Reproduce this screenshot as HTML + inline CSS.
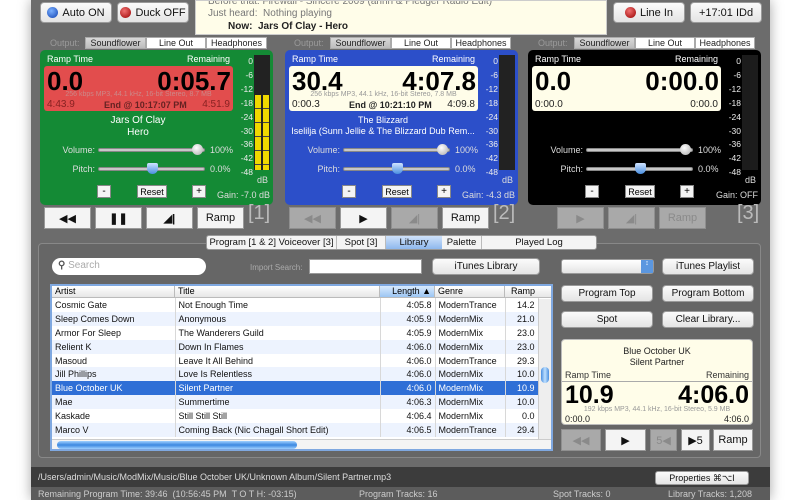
<!DOCTYPE html>
<html><head><meta charset="utf-8">
<style>
*{box-sizing:border-box;margin:0;padding:0}
body{width:800px;height:500px;overflow:hidden;background:#fff;font-family:"Liberation Sans",sans-serif;font-size:9px;position:relative}
.a{position:absolute}
#win{left:31px;top:0;width:739px;height:500px;background:#6c6c6c;box-shadow:0 0 12px rgba(0,0,0,.35)}
.btn{position:absolute;background:linear-gradient(#fbfbfb,#e4e4e4);border:1px solid #9a9a9a;border-radius:4px;color:#111;font-size:11px;display:flex;align-items:center;justify-content:center;white-space:nowrap}
.sq{position:absolute;background:#f4f4f4;border:1px solid #999;color:#111;display:flex;align-items:center;justify-content:center;font-size:11px}
.dis{background:#a9a9a9;color:#8a8a8a;border-color:#8f8f8f}
.dot{width:11px;height:11px;border-radius:50%;display:inline-block;margin-right:4px}
.tab{position:absolute;top:37px;height:12px;background:#fff;border:1px solid #aaa;font-size:9px;display:flex;align-items:center;justify-content:center;color:#222;white-space:nowrap}
.tab.sel{background:linear-gradient(#d8d8d8,#bdbdbd)}
.outl{position:absolute;top:38px;font-size:9px;color:#9a9a9a}
.deck{position:absolute;top:50px;width:233px;height:155px;border-radius:5px}
.lbl{position:absolute;font-size:9px;color:#fff;white-space:nowrap}
.disp{position:absolute;left:4px;top:16px;width:189px;height:45px;border-radius:3px}
.big{position:absolute;top:0;font-size:26px;font-weight:bold;color:#000;line-height:30px}
.sm{position:absolute;font-size:10px;color:#222;white-space:nowrap}
.scale{position:absolute;left:199px;top:5px;width:14px;font-size:8.5px;color:#eee;text-align:right;line-height:13.9px}
.meter{position:absolute;left:214px;top:5px;width:16px;height:115px;background:#222}
.trk{position:absolute;height:4px;background:#c8c8c8;border-radius:2px;border:1px solid #888}
.knob{position:absolute;width:11px;height:11px;border-radius:50%;background:radial-gradient(circle at 40% 35%,#fff,#aaa)}
.pk{position:absolute;width:11px;height:11px;background:linear-gradient(#cfe3ff,#4a8fe0);border-radius:2px 2px 6px 6px}
.mini{position:absolute;width:14px;height:13px;background:#f4f4f4;border:1px solid #888;font-size:10px;display:flex;align-items:center;justify-content:center}
.num{position:absolute;top:202px;font-size:20px;color:#bbb}
table{border-collapse:collapse;font-size:9px;width:100%}
td{height:13.9px;padding:0 3px;border-right:1px solid #d8d8d8;white-space:nowrap;color:#111;overflow:hidden}
tr:nth-child(even) td{background:#edf3fe}
tr.s td{background:#2f6fd6;color:#fff}
.r{text-align:right}
.gain{right:3px;top:140px;color:#ddd}
</style></head><body>
<div id="win" class="a"></div>

<!-- top -->
<div class="btn" style="left:40px;top:2px;width:72px;height:21px"><span class="dot" style="background:radial-gradient(circle at 40% 35%,#7ab0ff,#1040b0)"></span>Auto ON</div>
<div class="btn" style="left:117px;top:2px;width:72px;height:21px"><span class="dot" style="background:radial-gradient(circle at 40% 35%,#f07070,#900)"></span>Duck OFF</div>
<div class="a" style="left:195px;top:0;width:412px;height:35px;background:#fffde9;border:1px solid #ccc;overflow:hidden">
 <div class="a" style="left:12px;top:-5px;font-size:10px;color:#777;white-space:nowrap">Before that: Firewall - Sincere 2009 (ahhh &amp; Pledger Radio Edit)</div>
 <div class="a" style="left:12px;top:7px;font-size:10px;color:#777;white-space:nowrap">Just heard:&nbsp; Nothing playing</div>
 <div class="a" style="left:32px;top:20px;font-size:10px;font-weight:bold;color:#222;white-space:nowrap">Now:&nbsp; Jars Of Clay - Hero</div>
</div>
<div class="btn" style="left:613px;top:2px;width:72px;height:21px"><span class="dot" style="background:radial-gradient(circle at 40% 35%,#f07070,#900)"></span>Line In</div>
<div class="btn" style="left:690px;top:2px;width:72px;height:21px">+17:01 IDd</div>

<!-- output rows -->
<div class="outl" style="left:50px">Output:</div>
<div class="tab sel" style="left:85px;width:61px">Soundflower</div><div class="tab" style="left:146px;width:60px">Line Out</div><div class="tab" style="left:206px;width:61px">Headphones</div>
<div class="outl" style="left:294px">Output:</div>
<div class="tab sel" style="left:330px;width:61px">Soundflower</div><div class="tab" style="left:391px;width:60px">Line Out</div><div class="tab" style="left:451px;width:60px">Headphones</div>
<div class="outl" style="left:538px">Output:</div>
<div class="tab sel" style="left:574px;width:61px">Soundflower</div><div class="tab" style="left:635px;width:60px">Line Out</div><div class="tab" style="left:695px;width:60px">Headphones</div>

<!-- deck 1 -->
<div class="deck" style="left:40px;background:#148a35">
 <div class="lbl" style="left:7px;top:4px">Ramp Time</div><div class="lbl" style="left:140px;top:4px;width:50px;text-align:right">Remaining</div>
 <div class="disp" style="background:#e24d4d">
  <div class="big" style="left:3px">0.0</div><div class="big" style="right:2px">0:05.7</div>
  <div class="a" style="left:0;width:189px;top:25px;text-align:center;font-size:7px;color:#c88;white-space:nowrap">256 kbps MP3, 44.1 kHz, 16-bit Stereo, 8.7 MB</div>
  <div class="sm" style="left:3px;top:33px;color:#822">4:43.9</div>
  <div class="sm" style="left:60px;top:34px;font-size:9px;font-weight:bold;color:#622">End @ 10:17:07 PM</div>
  <div class="sm" style="right:3px;top:33px;color:#822">4:51.9</div>
 </div>
 <div class="a" style="left:0;width:196px;top:65px;text-align:center;color:#fff;font-size:10px;line-height:12px">Jars Of Clay<br>Hero</div>
 <div class="lbl" style="left:20px;top:95px;width:35px;text-align:right;color:#ddd">Volume:</div>
 <div class="trk" style="left:58px;top:98px;width:107px"></div><div class="knob" style="left:152px;top:94px"></div>
 <div class="lbl" style="left:170px;top:95px;color:#ddd">100%</div>
 <div class="lbl" style="left:20px;top:114px;width:35px;text-align:right;color:#ddd">Pitch:</div>
 <div class="trk" style="left:58px;top:117px;width:107px"></div><div class="pk" style="left:107px;top:113px"></div>
 <div class="lbl" style="left:170px;top:114px;color:#ddd">0.0%</div>
 <div class="mini" style="left:57px;top:135px">-</div><div class="mini" style="left:97px;top:135px;width:30px;font-size:9px">Reset</div><div class="mini" style="left:152px;top:135px">+</div>
 <div class="lbl gain">Gain: -7.0 dB</div>
 <div class="scale">0<br>-6<br>-12<br>-18<br>-24<br>-30<br>-36<br>-42<br>-48</div>
 <div class="meter"><div class="a" style="left:1px;top:40px;width:6px;height:75px;background:repeating-linear-gradient(#f0d800 0 13px,#444 13px 14px)"></div><div class="a" style="left:9px;top:40px;width:6px;height:75px;background:repeating-linear-gradient(#f0d800 0 13px,#444 13px 14px)"></div></div>
 <div class="lbl" style="left:217px;top:125px;color:#ddd">dB</div>
</div>
<div class="sq" style="left:44px;top:207px;width:47px;height:22px">&#9664;&#9664;</div>
<div class="sq" style="left:95px;top:207px;width:47px;height:22px;font-weight:bold">&#10074;&#10074;</div>
<div class="sq" style="left:146px;top:207px;width:47px;height:22px;font-weight:bold">&#9698;|</div>
<div class="sq" style="left:197px;top:207px;width:47px;height:22px">Ramp</div>
<div class="num" style="left:248px">[1]</div>

<!-- deck 2 -->
<div class="deck" style="left:285px;background:#2c4fc9">
 <div class="lbl" style="left:7px;top:4px">Ramp Time</div><div class="lbl" style="left:140px;top:4px;width:50px;text-align:right">Remaining</div>
 <div class="disp" style="background:#fffde9">
  <div class="big" style="left:3px">30.4</div><div class="big" style="right:2px">4:07.8</div>
  <div class="a" style="left:0;width:189px;top:25px;text-align:center;font-size:7px;color:#999;white-space:nowrap">256 kbps MP3, 44.1 kHz, 16-bit Stereo, 7.8 MB</div>
  <div class="sm" style="left:3px;top:33px">0:00.3</div>
  <div class="sm" style="left:60px;top:34px;font-size:9px;font-weight:bold">End @ 10:21:10 PM</div>
  <div class="sm" style="right:3px;top:33px">4:09.8</div>
 </div>
 <div class="a" style="left:0;width:196px;top:65px;text-align:center;color:#fff;font-size:9px;line-height:11px;white-space:nowrap">The Blizzard<br>Iselilja (Sunn Jellie &amp; The Blizzard Dub Rem...</div>
 <div class="lbl" style="left:20px;top:95px;width:35px;text-align:right;color:#ddd">Volume:</div>
 <div class="trk" style="left:58px;top:98px;width:107px"></div><div class="knob" style="left:152px;top:94px"></div>
 <div class="lbl" style="left:170px;top:95px;color:#ddd">100%</div>
 <div class="lbl" style="left:20px;top:114px;width:35px;text-align:right;color:#ddd">Pitch:</div>
 <div class="trk" style="left:58px;top:117px;width:107px"></div><div class="pk" style="left:107px;top:113px"></div>
 <div class="lbl" style="left:170px;top:114px;color:#ddd">0.0%</div>
 <div class="mini" style="left:57px;top:135px">-</div><div class="mini" style="left:97px;top:135px;width:30px;font-size:9px">Reset</div><div class="mini" style="left:152px;top:135px">+</div>
 <div class="lbl gain">Gain: -4.3 dB</div>
 <div class="scale">0<br>-6<br>-12<br>-18<br>-24<br>-30<br>-36<br>-42<br>-48</div>
 <div class="meter"></div>
 <div class="lbl" style="left:217px;top:125px;color:#ddd">dB</div>
</div>
<div class="sq dis" style="left:289px;top:207px;width:47px;height:22px">&#9664;&#9664;</div>
<div class="sq" style="left:340px;top:207px;width:47px;height:22px">&#9654;</div>
<div class="sq dis" style="left:391px;top:207px;width:47px;height:22px">&#9698;|</div>
<div class="sq" style="left:442px;top:207px;width:47px;height:22px">Ramp</div>
<div class="num" style="left:493px">[2]</div>

<!-- deck 3 -->
<div class="deck" style="left:528px;background:#000">
 <div class="lbl" style="left:7px;top:4px">Ramp Time</div><div class="lbl" style="left:140px;top:4px;width:50px;text-align:right">Remaining</div>
 <div class="disp" style="background:#fffde9">
  <div class="big" style="left:3px">0.0</div><div class="big" style="right:2px">0:00.0</div>
  <div class="sm" style="left:3px;top:33px">0:00.0</div>
  <div class="sm" style="right:3px;top:33px">0:00.0</div>
 </div>
 <div class="lbl" style="left:20px;top:95px;width:35px;text-align:right;color:#ddd">Volume:</div>
 <div class="trk" style="left:58px;top:98px;width:107px"></div><div class="knob" style="left:152px;top:94px"></div>
 <div class="lbl" style="left:170px;top:95px;color:#ddd">100%</div>
 <div class="lbl" style="left:20px;top:114px;width:35px;text-align:right;color:#ddd">Pitch:</div>
 <div class="trk" style="left:58px;top:117px;width:107px"></div><div class="pk" style="left:107px;top:113px"></div>
 <div class="lbl" style="left:170px;top:114px;color:#ddd">0.0%</div>
 <div class="mini" style="left:57px;top:135px">-</div><div class="mini" style="left:97px;top:135px;width:30px;font-size:9px">Reset</div><div class="mini" style="left:152px;top:135px">+</div>
 <div class="lbl gain">Gain: OFF</div>
 <div class="scale">0<br>-6<br>-12<br>-18<br>-24<br>-30<br>-36<br>-42<br>-48</div>
 <div class="meter" style="background:#1c1c1c"></div>
 <div class="lbl" style="left:217px;top:125px;color:#ddd">dB</div>
</div>
<div class="sq dis" style="left:557px;top:207px;width:47px;height:22px">&#9654;</div>
<div class="sq dis" style="left:608px;top:207px;width:47px;height:22px">&#9698;|</div>
<div class="sq dis" style="left:659px;top:207px;width:47px;height:22px">Ramp</div>
<div class="num" style="left:737px">[3]</div>

<!-- tab panel -->
<div class="a" style="left:38px;top:243px;width:723px;height:215px;border:1px solid #888;border-radius:4px;background:#666"></div>
<div class="a" style="left:206px;top:235px;height:15px;width:391px;background:#f4f4f4;border:1px solid #999;border-radius:3px;display:flex;font-size:9.5px;color:#111;white-space:nowrap;overflow:hidden">
 <div style="width:130px;text-align:center;line-height:13px;border-right:1px solid #bbb">Program [1 &amp; 2] Voiceover [3]</div>
 <div style="width:49px;text-align:center;line-height:13px;border-right:1px solid #bbb">Spot [3]</div>
 <div style="width:56px;text-align:center;line-height:13px;background:linear-gradient(#cfe2fb,#8fb8ee)">Library</div>
 <div style="width:40px;text-align:center;line-height:13px;border-right:1px solid #bbb">Palette</div>
 <div style="flex:1;text-align:center;line-height:13px">Played Log</div>
</div>
<div class="a" style="left:52px;top:258px;width:154px;height:17px;background:#fff;border-radius:9px;font-size:10px;color:#aaa;padding:2px 0 0 6px;white-space:nowrap"><b style="color:#555">&#9906;</b> Search</div>
<div class="a" style="left:250px;top:263px;font-size:8px;color:#aaa;white-space:nowrap">Import Search:</div>
<div class="a" style="left:309px;top:259px;width:113px;height:15px;background:#fff;border:1px solid #999"></div>
<div class="btn" style="left:432px;top:258px;width:108px;height:17px;font-size:10px">iTunes Library</div>

<!-- table -->
<div class="a" style="left:50px;top:284px;width:503px;height:167px;background:#fff;border:2px solid #7fa8e0;overflow:hidden">
 <div style="display:flex;height:12px;font-size:9px;background:linear-gradient(#fff,#e6e6e6);border-bottom:1px solid #bbb;white-space:nowrap">
  <div style="width:123px;padding-left:3px;border-right:1px solid #bbb">Artist</div>
  <div style="width:205px;padding-left:3px;border-right:1px solid #bbb">Title</div>
  <div style="width:55px;text-align:right;padding-right:3px;background:linear-gradient(#d9eafd,#9cc5f3);border-right:1px solid #bbb">Length &#9650;</div>
  <div style="width:70px;padding-left:3px;border-right:1px solid #bbb">Genre</div>
  <div style="width:33px;text-align:right;padding-right:3px">Ramp</div>
 </div>
 <table style="width:486px;table-layout:fixed">
  <col style="width:123px"><col style="width:205px"><col style="width:55px"><col style="width:70px"><col style="width:33px">
  <tr><td>Cosmic Gate</td><td>Not Enough Time</td><td class="r">4:05.8</td><td>ModernTrance</td><td class="r">14.2</td></tr>
  <tr><td>Sleep Comes Down</td><td>Anonymous</td><td class="r">4:05.9</td><td>ModernMix</td><td class="r">21.0</td></tr>
  <tr><td>Armor For Sleep</td><td>The Wanderers Guild</td><td class="r">4:05.9</td><td>ModernMix</td><td class="r">23.0</td></tr>
  <tr><td>Relient K</td><td>Down In Flames</td><td class="r">4:06.0</td><td>ModernMix</td><td class="r">23.0</td></tr>
  <tr><td>Masoud</td><td>Leave It All Behind</td><td class="r">4:06.0</td><td>ModernTrance</td><td class="r">29.3</td></tr>
  <tr><td>Jill Phillips</td><td>Love Is Relentless</td><td class="r">4:06.0</td><td>ModernMix</td><td class="r">10.0</td></tr>
  <tr class="s"><td>Blue October UK</td><td>Silent Partner</td><td class="r">4:06.0</td><td>ModernMix</td><td class="r">10.9</td></tr>
  <tr><td>Mae</td><td>Summertime</td><td class="r">4:06.3</td><td>ModernMix</td><td class="r">10.0</td></tr>
  <tr><td>Kaskade</td><td>Still Still Still</td><td class="r">4:06.4</td><td>ModernMix</td><td class="r">0.0</td></tr>
  <tr><td>Marco V</td><td>Coming Back (Nic Chagall Short Edit)</td><td class="r">4:06.5</td><td>ModernTrance</td><td class="r">29.4</td></tr>
 </table>
 <div class="a" style="left:486px;top:13px;width:13px;height:140px;background:#eee;border-left:1px solid #ccc"><div class="a" style="left:2px;top:68px;width:8px;height:16px;border-radius:4px;background:linear-gradient(90deg,#4a8fe0,#bfe0ff,#4a8fe0)"></div></div>
 <div class="a" style="left:0;top:153px;width:499px;height:10px;background:#f4f4f4;border-top:1px solid #ccc"><div class="a" style="left:5px;top:1px;width:240px;height:8px;border-radius:4px;background:linear-gradient(#9fd0ff,#3c88e0,#9fd0ff)"></div></div>
</div>

<!-- right side -->
<div class="a" style="left:561px;top:259px;width:93px;height:15px;background:linear-gradient(#fff,#e4e4e4);border:1px solid #999;border-radius:3px"><div class="a" style="right:0;top:0;width:12px;height:13px;background:#5b97e0;color:#fff;font-size:7px;text-align:center">&#8597;</div></div>
<div class="btn" style="left:662px;top:258px;width:92px;height:17px;font-size:10px">iTunes Playlist</div>
<div class="btn" style="left:561px;top:285px;width:92px;height:17px;font-size:10px">Program Top</div>
<div class="btn" style="left:662px;top:285px;width:92px;height:17px;font-size:10px">Program Bottom</div>
<div class="btn" style="left:561px;top:311px;width:92px;height:17px;font-size:10px">Spot</div>
<div class="btn" style="left:662px;top:311px;width:92px;height:17px;font-size:10px">Clear Library...</div>
<div class="a" style="left:561px;top:339px;width:192px;height:86px;background:#fffde9;border:1px solid #bbb;border-radius:4px">
 <div class="a" style="left:0;width:190px;top:6px;text-align:center;font-size:9px;line-height:11px;color:#222">Blue October UK<br>Silent Partner</div>
 <div class="a" style="left:3px;top:30px;font-size:9px;color:#333">Ramp Time</div><div class="a" style="right:3px;top:30px;font-size:9px;color:#333">Remaining</div>
 <div class="a" style="left:0;top:41px;width:190px;height:1px;background:#aaa"></div>
 <div class="big" style="left:3px;top:40px;font-size:25px">10.9</div><div class="big" style="right:3px;top:40px;font-size:25px">4:06.0</div>
 <div class="a" style="left:0;width:190px;top:66px;text-align:center;font-size:7px;color:#999;white-space:nowrap">192 kbps MP3, 44.1 kHz, 16-bit Stereo, 5.9 MB</div>
 <div class="sm" style="left:3px;top:74px;font-size:9px">0:00.0</div><div class="sm" style="right:3px;top:74px;font-size:9px">4:06.0</div>
</div>
<div class="sq dis" style="left:561px;top:429px;width:40px;height:22px">&#9664;&#9664;</div>
<div class="sq" style="left:605px;top:429px;width:41px;height:22px">&#9654;</div>
<div class="sq dis" style="left:650px;top:429px;width:27px;height:22px">5&#9664;</div>
<div class="sq" style="left:681px;top:429px;width:29px;height:22px">&#9654;5</div>
<div class="sq" style="left:713px;top:429px;width:40px;height:22px">Ramp</div>

<!-- bottom -->
<div class="a" style="left:31px;top:467px;width:739px;height:20px;background:#3c3c3c"></div>
<div class="a" style="left:38px;top:472px;font-size:9px;color:#ddd;white-space:nowrap">/Users/admin/Music/ModMix/Music/Blue October UK/Unknown Album/Silent Partner.mp3</div>
<div class="btn" style="left:655px;top:471px;width:94px;height:14px;font-size:9px;border-radius:3px">Properties &#8984;&#8997;I</div>
<div class="a" style="left:31px;top:487px;width:739px;height:13px;background:#5c5c5c;font-size:9px;color:#ccc;white-space:nowrap">
 <span class="a" style="left:7px;top:2px">Remaining Program Time: 39:46 &nbsp;(10:56:45 PM &nbsp;T O T H: -03:15)</span>
 <span class="a" style="left:328px;top:2px">Program Tracks: 16</span>
 <span class="a" style="left:522px;top:2px">Spot Tracks: 0</span>
 <span class="a" style="right:18px;top:2px">Library Tracks: 1,208</span>
</div>
</body></html>
